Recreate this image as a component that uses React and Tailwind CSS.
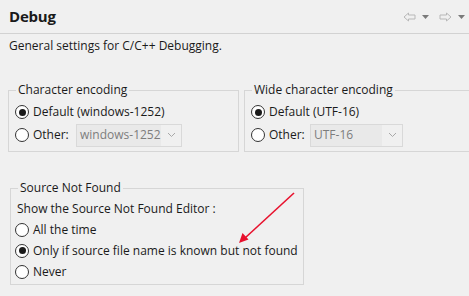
import React from 'react';

function Radio({ checked }) {
  return (
    <span className="w-[14px] h-[14px] rounded-full border border-[#333] bg-white flex items-center justify-center shrink-0">
      {checked && <span className="w-[7px] h-[7px] rounded-full bg-[#1a1a1a]" />}
    </span>
  );
}

function Combo({ value, width }) {
  return (
    <div className={`flex items-center h-[23px] shrink-0 border border-[#d9d9d9] bg-[#f0f0f0] ${width}`}>
      <div className="flex-1 h-full pl-[3px] bg-[#e9e9e9] flex items-center text-[#7d7d7d] whitespace-nowrap overflow-hidden">{value}</div>
      <div className="w-[20px] flex items-center justify-center">
        <svg width="9" height="6" viewBox="0 0 9 6">
          <path d="M1 1 L4.5 4.5 L8 1" fill="none" stroke="#a8a8a8" strokeWidth="1" />
        </svg>
      </div>
    </div>
  );
}

function NavIcons() {
  return (
    <div className="flex items-center gap-[6px] pr-[4px]">
      <svg width="13" height="10" viewBox="0 0 13 10">
        <path d="M1 5 L5.5 1 V3 H12 V7 H5.5 V9 Z" fill="none" stroke="#b8b8b8" strokeWidth="1" />
      </svg>
      <svg width="7" height="4" viewBox="0 0 7 4"><path d="M0 0 H7 L3.5 4 Z" fill="#7a7a7a" /></svg>
      <svg width="13" height="10" viewBox="0 0 13 10" className="ml-[4px]">
        <path d="M12 5 L7.5 1 V3 H1 V7 H7.5 V9 Z" fill="none" stroke="#b8b8b8" strokeWidth="1" />
      </svg>
      <svg width="7" height="4" viewBox="0 0 7 4"><path d="M0 0 H7 L3.5 4 Z" fill="#7a7a7a" /></svg>
    </div>
  );
}

export default function App() {
  return (
    <div
      className="relative w-[469px] h-[296px] overflow-hidden bg-[#f0f0f0] text-[#1a1a1a] text-[12px]"
      style={{ fontFamily: '"Open Sans", "Noto Sans", sans-serif' }}
    >
      {/* header */}
      <div className="h-[34px] flex items-center justify-between pl-[9px] border-b border-[#d2d2d2]">
        <span className="text-[15px] font-bold tracking-[-0.2px]">Debug</span>
        <NavIcons />
      </div>

      <div className="pl-[9px] pt-[4px] leading-[16px]">General settings for C/C++ Debugging.</div>

      {/* encoding groups */}
      <div className="flex gap-[5px] pl-[8px] mt-[29px] -mr-[10px]">
        <fieldset className="w-[231px] h-[69px] border border-[#d6d6d6] px-[6px] pt-0 pb-0">
          <legend className="px-[2px] ml-[1px] leading-[14px]">Character encoding</legend>
          <div className="flex items-center gap-[4px] h-[20px] mt-[5px]">
            <Radio checked />
            <span>Default (windows-1252)</span>
          </div>
          <div className="flex items-center gap-[4px] h-[26px]">
            <Radio />
            <span className="w-[39px] shrink-0">Other:</span>
            <Combo value="windows-1252" width="w-[106px]" />
          </div>
        </fieldset>
        <fieldset className="flex-1 h-[69px] border border-[#d6d6d6] px-[6px] pt-0 pb-0">
          <legend className="px-[2px] ml-[1px] leading-[14px]">Wide character encoding</legend>
          <div className="flex items-center gap-[4px] h-[20px] mt-[5px]">
            <Radio checked />
            <span>Default (UTF-16)</span>
          </div>
          <div className="flex items-center gap-[4px] h-[26px]">
            <Radio />
            <span className="w-[37px] shrink-0">Other:</span>
            <Combo value="UTF-16" width="w-[93px]" />
          </div>
        </fieldset>
      </div>

      {/* source not found */}
      <fieldset className="ml-[10px] mt-[29px] w-[294px] h-[104px] border border-[#d6d6d6] px-[4px] pt-0 pb-0">
        <legend className="px-[2px] ml-[3px] leading-[14px]">Source Not Found</legend>
        <div className="flex items-center h-[21px] pl-[2px] mt-[3px]">Show the Source Not Found Editor :</div>
        <div className="flex items-center gap-[4px] h-[21px]">
          <Radio />
          <span>All the time</span>
        </div>
        <div className="flex items-center gap-[4px] h-[21px]">
          <Radio checked />
          <span>Only if source file name is known but not found</span>
        </div>
        <div className="flex items-center gap-[4px] h-[21px]">
          <Radio />
          <span>Never</span>
        </div>
      </fieldset>

      {/* annotation arrow */}
      <svg className="absolute left-0 top-0 pointer-events-none" width="469" height="296">
        <line x1="294" y1="193" x2="245" y2="238" stroke="#e8112d" strokeWidth="1.6" />
        <path d="M239 243 L242.5 233 L248.5 239.5 Z" fill="#e8112d" />
      </svg>
    </div>
  );
}
